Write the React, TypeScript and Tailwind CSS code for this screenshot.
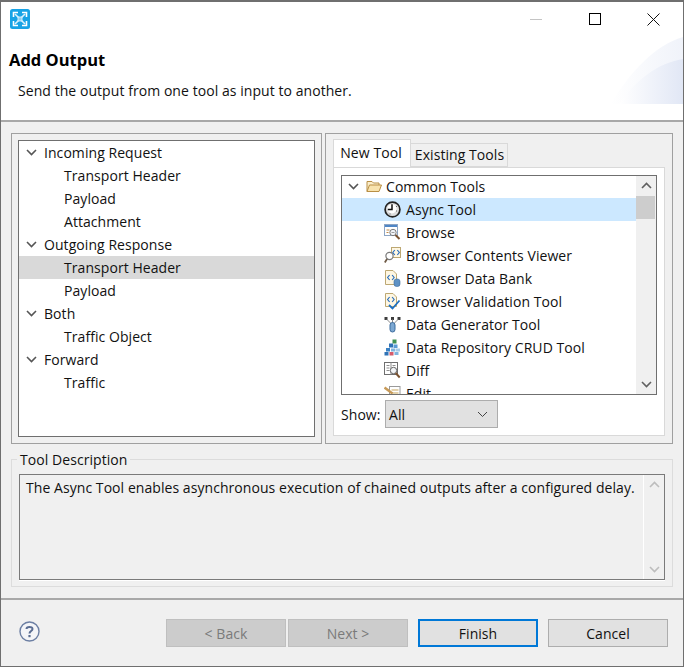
import React from 'react';

const font = { fontFamily: '"Open Sans", "Noto Sans", sans-serif' };

const Chevron = ({ color = '#555555', thin }: { color?: string; thin?: boolean }) => (
  <svg width="11" height="7" viewBox="0 0 11 7" fill="none">
    <path d="M1 1 L5.5 5.5 L10 1" stroke={color} strokeWidth={thin ? 1 : 1.6} />
  </svg>
);

const ClockIcon = () => (
  <svg width="17" height="17" viewBox="0 0 17 17">
    <circle cx="8.5" cy="8.5" r="7.4" fill="#dedede" stroke="#222" strokeWidth="1.7" />
    <circle cx="8" cy="7.8" r="4.6" fill="#fff" />
    <path d="M8 3.2V8.5H3.8" stroke="#111" strokeWidth="1.5" fill="none" />
    <path d="M12 5.5h1M12 10h1M6 12.5v1" stroke="#666" />
  </svg>
);

const BrowseIcon = () => (
  <svg width="17" height="17" viewBox="0 0 17 17">
    <rect x="0.5" y="0.5" width="13" height="11" fill="#fff" stroke="#8da5c4" />
    <rect x="1" y="1" width="12" height="2" fill="#4f86c6" />
    <path d="M2.5 6h3M2.5 8.5h2" stroke="#c08a4a" />
    <circle cx="9" cy="8.5" r="3.2" fill="#f1f4f8" stroke="#7a7a7a" />
    <path d="M7.5 8.5h3" stroke="#a0a0a0" />
    <path d="M11.5 11 L15.5 15" stroke="#7a5230" strokeWidth="2" />
  </svg>
);

const CodeMark = ({ x, y }: { x: number; y: number }) => (
  <path
    d={`M${x + 2} ${y} L${x} ${y + 2.5} L${x + 2} ${y + 5} M${x + 4.5} ${y} L${x + 6.5} ${y + 2.5} L${x + 4.5} ${y + 5}`}
    stroke="#2a6fbe"
    strokeWidth="1.2"
    fill="none"
  />
);

const ViewerIcon = () => (
  <svg width="17" height="17" viewBox="0 0 17 17">
    <rect x="7.5" y="0.5" width="9" height="10" fill="#fff7e2" stroke="#bda873" />
    <CodeMark x={8.8} y={3} />
    <circle cx="5.5" cy="9" r="3.6" fill="#fff" stroke="#7a7a7a" strokeWidth="1.2" />
    <path d="M3 12 L0.8 15.5" stroke="#6f5a45" strokeWidth="1.8" />
  </svg>
);

const DataBankIcon = () => (
  <svg width="17" height="17" viewBox="0 0 17 17">
    <path d="M1.5 0.5H9L12.5 4V14.5H1.5Z" fill="#fff7e2" stroke="#bda873" />
    <CodeMark x={3.6} y={5} />
    <rect x="10" y="9" width="6" height="7.5" rx="2.5" fill="#5f92c4" stroke="#3d6c9e" strokeWidth="0.6" />
  </svg>
);

const ValidationIcon = () => (
  <svg width="17" height="17" viewBox="0 0 17 17">
    <path d="M1.5 0.5H9L12.5 4V13.5H1.5Z" fill="#fff7e2" stroke="#bda873" />
    <CodeMark x={3.6} y={4} />
    <path d="M5 12 L8.5 15.5 L15.5 7.5" stroke="#1b6fc2" strokeWidth="1.8" fill="none" />
  </svg>
);

const GeneratorIcon = () => (
  <svg width="17" height="17" viewBox="0 0 17 17">
    <rect x="0.5" y="1" width="3" height="3" fill="#3c3c3c" />
    <rect x="7" y="1" width="3" height="3" fill="#3c3c3c" />
    <rect x="13.5" y="1" width="3" height="3" fill="#3c3c3c" />
    <path d="M3 3.5 L6.5 7M8.5 3.5V7M14 3.5 L10.5 7" stroke="#8a8a8a" />
    <rect x="6" y="6.5" width="5" height="9.5" rx="2.5" fill="#7da8d2" stroke="#3d6c9e" />
  </svg>
);

const RepositoryIcon = () => (
  <svg width="17" height="17" viewBox="0 0 17 17">
    <rect x="8.5" y="0.5" width="4" height="4" fill="#3f9152" />
    <rect x="5" y="4.5" width="4" height="4" fill="#2f73b6" />
    <rect x="9.5" y="5.5" width="4" height="3.5" fill="#5a9bd5" />
    <rect x="2" y="9" width="4" height="3.5" fill="#3b82c4" />
    <rect x="7" y="9.5" width="4" height="3" fill="#7fb3de" />
    <rect x="11.5" y="9.5" width="4.5" height="3" fill="#a6cbe8" />
    <rect x="0.5" y="13" width="4" height="3.5" fill="#2f73b6" />
    <rect x="5.5" y="13" width="4" height="3.5" fill="#d65b6b" />
    <rect x="10.5" y="13" width="4" height="3" fill="#7fb3de" />
  </svg>
);

const DiffIcon = () => (
  <svg width="17" height="17" viewBox="0 0 17 17">
    <rect x="0.5" y="0.5" width="13" height="12" fill="#fff" stroke="#6e6e6e" />
    <path d="M7 0.5V12.5M2.5 3.5h3M2.5 6h3M2.5 8.5h3M8.5 3.5h3" stroke="#8f8f8f" />
    <circle cx="9.5" cy="8.5" r="3.2" fill="#f2f4f7" stroke="#666" />
    <path d="M11.7 11 L15.7 15.5" stroke="#7a5230" strokeWidth="2" />
  </svg>
);

const EditIcon = () => (
  <svg width="17" height="17" viewBox="0 0 17 17">
    <rect x="5.5" y="1.5" width="10.5" height="14" fill="#fff" stroke="#9a9a9a" />
    <path d="M7.5 5h7M7.5 8h7M7.5 11h7" stroke="#c7a45a" />
    <path d="M0.5 2.5 L8.5 8.5" stroke="#c79a58" strokeWidth="2.4" />
  </svg>
);

const FolderIcon = () => (
  <svg width="16" height="13" viewBox="0 0 16 13">
    <path d="M1 11.5V1.5H6L7.5 3H13V5" fill="#fbeecb" stroke="#b98f45" />
    <path d="M1 11.5 L3.5 5H15.5L13 11.5Z" fill="#f8e3ae" stroke="#b98f45" />
  </svg>
);

const LeftRow = ({ label, child, selected }: { label: string; child?: boolean; selected?: boolean }) => (
  <div className={`flex h-[23px] items-center ${selected ? 'bg-[#d9d9d9]' : ''}`}>
    {child ? (
      <span className="pl-[45px]">{label}</span>
    ) : (
      <>
        <span className="ml-[7px] mr-[7px] flex w-[11px]"><Chevron /></span>
        <span>{label}</span>
      </>
    )}
  </div>
);

const ToolRow = ({ icon, label, selected }: { icon: React.ReactNode; label: string; selected?: boolean }) => (
  <div className={`flex h-[23px] shrink-0 items-center pl-[42px] ${selected ? 'bg-[#cce8ff]' : ''}`}>
    <span className="mr-[5px] flex w-[17px]">{icon}</span>
    <span>{label}</span>
  </div>
);

const DialogButton = ({ label, disabled, primary }: { label: string; disabled?: boolean; primary?: boolean }) => (
  <div
    className={`flex h-[28px] w-[120px] items-center justify-center ${
      disabled
        ? 'border border-[#bfbfbf] bg-[#cccccc] text-[#7a7a7a]'
        : primary
        ? 'border-2 border-[#0078d7] bg-[#e1e1e1]'
        : 'border border-[#adadad] bg-[#e1e1e1]'
    }`}
  >
    {label}
  </div>
);

export default function App() {
  return (
    <div
      style={font}
      className="relative flex h-[667px] w-[684px] flex-col overflow-hidden border border-t-2 border-[#6f6f6f] bg-[#f0f0f0] text-[14px] tracking-[0.06px] text-[#111]"
    >
      {/* header */}
      <div className="relative h-[120px] shrink-0 border-b-2 border-[#a8a8a8] bg-white">
        <svg className="absolute right-0 top-[35px]" width="72" height="67" viewBox="0 0 72 67">
          <defs>
            <linearGradient id="fade" x1="0" x2="1" y1="0" y2="0">
              <stop offset="0" stopColor="#ffffff" />
              <stop offset="1" stopColor="#e1e7f5" />
            </linearGradient>
            <linearGradient id="fadeOuter" x1="0" x2="1" y1="0" y2="0">
              <stop offset="0" stopColor="#ffffff" />
              <stop offset="1" stopColor="#f0f3fa" />
            </linearGradient>
          </defs>
          <path d="M0 67 C18 36 44 8 72 0 V67 Z" fill="url(#fadeOuter)" />
          <path d="M8 67 C24 44 46 26 72 22 V67 Z" fill="url(#fade)" />
        </svg>
        <div className="flex h-[46px] items-start justify-between pl-[9px] pt-[7px]">
          <svg width="20" height="20" viewBox="0 0 20 20">
            <rect width="20" height="20" rx="2.5" fill="#18a3e6" />
            <path d="M3.5 8V3.5H8M12 3.5H16.5V8M16.5 12V16.5H12M8 16.5H3.5V12" fill="none" stroke="#ffffff" strokeWidth="1.6" />
            <path d="M5 5L8.5 8.5M15 5L11.5 8.5M15 15L11.5 11.5M5 15L8.5 11.5" stroke="#d8f1fd" strokeWidth="1.6" />
            <rect x="8" y="8" width="4" height="4" fill="#8ed2f3" stroke="#e6f6fe" strokeWidth="0.8" />
          </svg>
          <div className="relative flex">
            <div className="flex h-[20px] w-[59px] items-center justify-center">
              <span className="h-px w-[12px] bg-[#c4c4c4]" />
            </div>
            <div className="flex h-[20px] w-[59px] items-center justify-center">
              <span className="h-[12px] w-[12px] border border-black" />
            </div>
            <div className="flex h-[20px] w-[59px] items-center justify-center">
              <svg width="13" height="13" viewBox="0 0 13 13">
                <path d="M0.5 0.5 L12.5 12.5 M12.5 0.5 L0.5 12.5" stroke="#111" />
              </svg>
            </div>
          </div>
        </div>
        <div className="relative pl-[8px] text-[16.5px] font-bold leading-[24px] tracking-normal text-black">Add Output</div>
        <div className="relative pl-[17px] pt-[9px] leading-[20px]">Send the output from one tool as input to another.</div>
      </div>

      {/* master/detail */}
      <div className="mx-[10px] mt-[11px] flex h-[311px] shrink-0 gap-[3px]">
        <div className="w-[311px] border border-[#a0a0a0] p-[6px]">
          <div className="h-full border border-[#6f6f6f] bg-white">
            <LeftRow label="Incoming Request" />
            <LeftRow label="Transport Header" child />
            <LeftRow label="Payload" child />
            <LeftRow label="Attachment" child />
            <LeftRow label="Outgoing Response" />
            <LeftRow label="Transport Header" child selected />
            <LeftRow label="Payload" child />
            <LeftRow label="Both" />
            <LeftRow label="Traffic Object" child />
            <LeftRow label="Forward" />
            <LeftRow label="Traffic" child />
          </div>
        </div>

        <div className="flex w-[348px] flex-col border border-[#a0a0a0] px-[7px] pt-[6px]">
          <div className="flex h-[27px] shrink-0 items-end">
            <div className="relative z-10 flex h-[28px] w-[78px] items-center justify-center border border-b-0 border-[#d9d9d9] bg-white pb-[2px] pr-[2px]">
              New Tool
            </div>
            <div className="flex h-[24px] w-[97px] items-center justify-center border border-l-0 border-[#d9d9d9] bg-[#f0f0f0] pb-[2px] pl-[1px]">
              Existing Tools
            </div>
          </div>
          <div className="flex h-[269px] w-[332px] flex-col border border-[#d9d9d9] bg-white px-[7px] pt-[7px]">
            <div className="flex h-[220px] shrink-0 border border-[#6f6f6f]">
              <div className="min-w-0 flex-1 overflow-hidden">
                <div className="flex h-[22px] items-center pb-[1px] pl-[6px]">
                  <span className="mr-[7px] flex w-[11px]"><Chevron /></span>
                  <span className="mr-[4px] flex"><FolderIcon /></span>
                  <span>Common Tools</span>
                </div>
                <ToolRow icon={<ClockIcon />} label="Async Tool" selected />
                <ToolRow icon={<BrowseIcon />} label="Browse" />
                <ToolRow icon={<ViewerIcon />} label="Browser Contents Viewer" />
                <ToolRow icon={<DataBankIcon />} label="Browser Data Bank" />
                <ToolRow icon={<ValidationIcon />} label="Browser Validation Tool" />
                <ToolRow icon={<GeneratorIcon />} label="Data Generator Tool" />
                <ToolRow icon={<RepositoryIcon />} label="Data Repository CRUD Tool" />
                <ToolRow icon={<DiffIcon />} label="Diff" />
                <ToolRow icon={<EditIcon />} label="Edit" />
              </div>
              <div className="flex w-[20px] shrink-0 flex-col items-center bg-[#f0f0f0]">
                <div className="flex h-[20px] rotate-180 items-center justify-center"><Chevron color="#606060" /></div>
                <div className="h-[23px] w-[19px] self-start bg-[#cdcdcd]" />
                <div className="flex-1" />
                <div className="flex h-[20px] items-center justify-center"><Chevron color="#606060" /></div>
              </div>
            </div>
            <div className="mt-[5px] flex items-center">
              <span className="mr-[5px] w-[39px]">Show:</span>
              <div className="flex h-[28px] w-[113px] items-center justify-between border border-[#adadad] bg-[#e1e1e1] pl-[3px] pr-[9px]">
                <span>All</span>
                <Chevron color="#444" thin />
              </div>
            </div>
          </div>
        </div>
      </div>

      {/* tool description */}
      <div className="relative mx-[10px] mt-[15px] h-[128px] shrink-0 border border-[#dcdcdc] px-[7px] pt-[14px]">
        <span className="absolute left-[5px] top-[-10px] bg-[#f0f0f0] px-[3px] leading-[20px]">Tool Description</span>
        <div className="flex h-[106px] border border-[#7a7a7a] shadow-[0_1px_0_#ffffff]">
          <div className="flex-1 overflow-hidden whitespace-nowrap pl-[6px] pt-[3px] leading-[20px]">
            The Async Tool enables asynchronous execution of chained outputs after a configured delay.
          </div>
          <div className="flex w-[21px] shrink-0 flex-col items-center justify-between border-l border-white py-[6px]">
            <span className="flex rotate-180"><Chevron color="#bdbdbd" /></span>
            <Chevron color="#bdbdbd" />
          </div>
        </div>
      </div>

      {/* footer */}
      <div className="mt-[11px] flex flex-1 items-start border-t-2 border-[#a8a8a8] pl-[18px] pr-[15px] pt-[19px]">
        <svg className="mt-[2px]" width="21" height="21" viewBox="0 0 21 21">
          <circle cx="10.5" cy="10.5" r="9.5" fill="#f4f5f8" stroke="#6c7fa3" strokeWidth="1.4" />
          <path d="M7.5 8 C7.5 5.5 13.5 5.2 13.5 8 C13.5 10 10.5 10 10.5 12.5" fill="none" stroke="#5a6d92" strokeWidth="2" />
          <rect x="9.4" y="14" width="2.2" height="2.2" fill="#5a6d92" />
        </svg>
        <div className="ml-auto flex">
          <DialogButton label="< Back" disabled />
          <div className="ml-[2px]"><DialogButton label="Next >" disabled /></div>
          <div className="ml-[10px]"><DialogButton label="Finish" primary /></div>
          <div className="ml-[10px]"><DialogButton label="Cancel" /></div>
        </div>
      </div>
    </div>
  );
}
